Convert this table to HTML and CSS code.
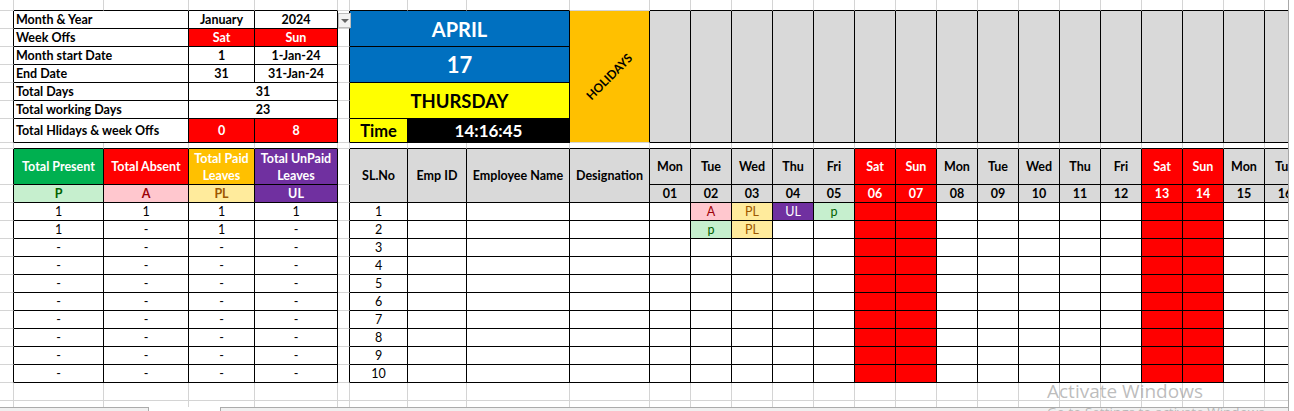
FILE: index.html
```html
<!DOCTYPE html>
<html>
<head>
<meta charset="utf-8">
<link rel="stylesheet" href="styles.css">
</head>
<body>
<div class="window">
  <div class="main">
    <div class="viewport">
      <table class="sheet">
        <colgroup>
          <col class="cA"><col class="cB"><col class="cC"><col class="cD"><col class="cE"><col class="cF"><col class="cG"><col class="cH"><col class="cI"><col class="cJ">
          <col class="cd"><col class="cd"><col class="cd"><col class="cd"><col class="cd"><col class="cd"><col class="cd"><col class="cd">
          <col class="cd"><col class="cd"><col class="cd"><col class="cd"><col class="cd"><col class="cd"><col class="cd"><col class="cd">
        </colgroup>
        <tr class="h11">
          <td></td><td class="kb"></td><td class="kb"></td><td class="kb"></td><td class="kb"></td><td></td><td class="kb"></td><td class="kb"></td><td class="kb"></td><td></td>
          <td class="kb"></td><td class="kb"></td><td class="kb"></td><td class="kb"></td><td class="kb"></td><td class="kb"></td><td class="kb"></td><td class="kb"></td>
          <td class="kb"></td><td class="kb"></td><td class="kb"></td><td class="kb"></td><td class="kb"></td><td class="kb"></td><td class="kb"></td><td class="kb"></td>
        </tr>
        <tr class="h18">
          <td class="kr"></td><td colspan="2" class="k lbl">Month &amp; Year</td><td class="k b">January</td><td class="k b">2024</td>
          <td class="kr ddcell"><span class="dd"><span class="tri"></span></span></td>
          <td colspan="3" rowspan="2" class="k blue big1">APRIL</td>
          <td rowspan="7" class="kr orange"><span class="hol">HOLIDAYS</span></td>
          <td rowspan="7" class="k gray"></td><td rowspan="7" class="k gray"></td><td rowspan="7" class="k gray"></td><td rowspan="7" class="k gray"></td>
          <td rowspan="7" class="k gray"></td><td rowspan="7" class="k gray"></td><td rowspan="7" class="k gray"></td><td rowspan="7" class="k gray"></td>
          <td rowspan="7" class="k gray"></td><td rowspan="7" class="k gray"></td><td rowspan="7" class="k gray"></td><td rowspan="7" class="k gray"></td>
          <td rowspan="7" class="k gray"></td><td rowspan="7" class="k gray"></td><td rowspan="7" class="k gray"></td><td rowspan="7" class="k gray"></td>
        </tr>
        <tr class="h18">
          <td class="kr"></td><td colspan="2" class="k lbl">Week Offs</td><td class="k red b">Sat</td><td class="k red b">Sun</td><td class="kr"></td>
        </tr>
        <tr class="h18">
          <td class="kr"></td><td colspan="2" class="k lbl">Month start Date</td><td class="k b">1</td><td class="k b">1-Jan-24</td><td class="kr"></td>
          <td colspan="3" rowspan="2" class="k blue big2">17</td>
        </tr>
        <tr class="h18">
          <td class="kr"></td><td colspan="2" class="k lbl">End Date</td><td class="k b">31</td><td class="k b">31-Jan-24</td><td class="kr"></td>
        </tr>
        <tr class="h18">
          <td class="kr"></td><td colspan="2" class="k lbl">Total Days</td><td colspan="2" class="k b">31</td><td class="kr"></td>
          <td colspan="3" rowspan="2" class="k yellow big3">THURSDAY</td>
        </tr>
        <tr class="h18">
          <td class="kr"></td><td colspan="2" class="k lbl">Total working Days</td><td colspan="2" class="k b">23</td><td class="kr"></td>
        </tr>
        <tr class="h24">
          <td class="kr"></td><td colspan="2" class="k lbl">Total Hlidays &amp; week Offs</td><td class="k red b">0</td><td class="k red b">8</td><td class="kr"></td>
          <td class="k yellow time">Time</td><td colspan="2" class="k black clock">14:16:45</td>
        </tr>
        <tr class="h6">
          <td></td><td class="kb"></td><td class="kb"></td><td class="kb"></td><td class="kb"></td><td></td><td class="kb"></td><td class="kb"></td><td class="kb"></td><td class="kb"></td>
          <td class="kb"></td><td class="kb"></td><td class="kb"></td><td class="kb"></td><td class="kb"></td><td class="kb"></td><td class="kb"></td><td class="kb"></td>
          <td class="kb"></td><td class="kb"></td><td class="kb"></td><td class="kb"></td><td class="kb"></td><td class="kb"></td><td class="kb"></td><td class="kb"></td>
        </tr>
        <tr class="h36">
          <td class="kr"></td>
          <td class="k hd green">Total Present</td><td class="k hd red">Total Absent</td><td class="k hd orange wt">Total Paid<br>Leaves</td><td class="k hd purple">Total UnPaid<br>Leaves</td>
          <td class="kr"></td>
          <td rowspan="2" class="k gray b">SL.No</td><td rowspan="2" class="k gray b">Emp ID</td><td rowspan="2" class="k gray b">Employee Name</td><td rowspan="2" class="k gray b">Designation</td>
          <td class="k gray b">Mon</td><td class="k gray b">Tue</td><td class="k gray b">Wed</td><td class="k gray b">Thu</td><td class="k gray b">Fri</td><td class="k red b">Sat</td><td class="k red b">Sun</td>
          <td class="k gray b">Mon</td><td class="k gray b">Tue</td><td class="k gray b">Wed</td><td class="k gray b">Thu</td><td class="k gray b">Fri</td><td class="k red b">Sat</td><td class="k red b">Sun</td>
          <td class="k gray b">Mon</td><td class="k gray b">Tue</td>
        </tr>
        <tr class="h18">
          <td class="kr"></td>
          <td class="k sP b">P</td><td class="k sA b">A</td><td class="k sPL b">PL</td><td class="k purple b">UL</td>
          <td class="kr"></td>
          <td class="k gray b">01</td><td class="k gray b">02</td><td class="k gray b">03</td><td class="k gray b">04</td><td class="k gray b">05</td><td class="k red b">06</td><td class="k red b">07</td>
          <td class="k gray b">08</td><td class="k gray b">09</td><td class="k gray b">10</td><td class="k gray b">11</td><td class="k gray b">12</td><td class="k red b">13</td><td class="k red b">14</td>
          <td class="k gray b">15</td><td class="k gray b">16</td>
        </tr>
        <tr class="h18">
          <td class="kr"></td><td class="k">1</td><td class="k">1</td><td class="k">1</td><td class="k">1</td><td class="kr"></td>
          <td class="k">1</td><td class="k"></td><td class="k"></td><td class="k"></td>
          <td class="k"></td><td class="k sA">A</td><td class="k sPL">PL</td><td class="k purple">UL</td><td class="k sP">p</td><td class="k red"></td><td class="k red"></td>
          <td class="k"></td><td class="k"></td><td class="k"></td><td class="k"></td><td class="k"></td><td class="k red"></td><td class="k red"></td><td class="k"></td><td class="k"></td>
        </tr>
        <tr class="h18">
          <td class="kr"></td><td class="k">1</td><td class="k">-</td><td class="k">1</td><td class="k">-</td><td class="kr"></td>
          <td class="k">2</td><td class="k"></td><td class="k"></td><td class="k"></td>
          <td class="k"></td><td class="k sP">p</td><td class="k sPL">PL</td><td class="k"></td><td class="k"></td><td class="k red"></td><td class="k red"></td>
          <td class="k"></td><td class="k"></td><td class="k"></td><td class="k"></td><td class="k"></td><td class="k red"></td><td class="k red"></td><td class="k"></td><td class="k"></td>
        </tr>
        <tr class="h18">
          <td class="kr"></td><td class="k">-</td><td class="k">-</td><td class="k">-</td><td class="k">-</td><td class="kr"></td>
          <td class="k">3</td><td class="k"></td><td class="k"></td><td class="k"></td>
          <td class="k"></td><td class="k"></td><td class="k"></td><td class="k"></td><td class="k"></td><td class="k red"></td><td class="k red"></td>
          <td class="k"></td><td class="k"></td><td class="k"></td><td class="k"></td><td class="k"></td><td class="k red"></td><td class="k red"></td><td class="k"></td><td class="k"></td>
        </tr>
        <tr class="h18">
          <td class="kr"></td><td class="k">-</td><td class="k">-</td><td class="k">-</td><td class="k">-</td><td class="kr"></td>
          <td class="k">4</td><td class="k"></td><td class="k"></td><td class="k"></td>
          <td class="k"></td><td class="k"></td><td class="k"></td><td class="k"></td><td class="k"></td><td class="k red"></td><td class="k red"></td>
          <td class="k"></td><td class="k"></td><td class="k"></td><td class="k"></td><td class="k"></td><td class="k red"></td><td class="k red"></td><td class="k"></td><td class="k"></td>
        </tr>
        <tr class="h18">
          <td class="kr"></td><td class="k">-</td><td class="k">-</td><td class="k">-</td><td class="k">-</td><td class="kr"></td>
          <td class="k">5</td><td class="k"></td><td class="k"></td><td class="k"></td>
          <td class="k"></td><td class="k"></td><td class="k"></td><td class="k"></td><td class="k"></td><td class="k red"></td><td class="k red"></td>
          <td class="k"></td><td class="k"></td><td class="k"></td><td class="k"></td><td class="k"></td><td class="k red"></td><td class="k red"></td><td class="k"></td><td class="k"></td>
        </tr>
        <tr class="h18">
          <td class="kr"></td><td class="k">-</td><td class="k">-</td><td class="k">-</td><td class="k">-</td><td class="kr"></td>
          <td class="k">6</td><td class="k"></td><td class="k"></td><td class="k"></td>
          <td class="k"></td><td class="k"></td><td class="k"></td><td class="k"></td><td class="k"></td><td class="k red"></td><td class="k red"></td>
          <td class="k"></td><td class="k"></td><td class="k"></td><td class="k"></td><td class="k"></td><td class="k red"></td><td class="k red"></td><td class="k"></td><td class="k"></td>
        </tr>
        <tr class="h18">
          <td class="kr"></td><td class="k">-</td><td class="k">-</td><td class="k">-</td><td class="k">-</td><td class="kr"></td>
          <td class="k">7</td><td class="k"></td><td class="k"></td><td class="k"></td>
          <td class="k"></td><td class="k"></td><td class="k"></td><td class="k"></td><td class="k"></td><td class="k red"></td><td class="k red"></td>
          <td class="k"></td><td class="k"></td><td class="k"></td><td class="k"></td><td class="k"></td><td class="k red"></td><td class="k red"></td><td class="k"></td><td class="k"></td>
        </tr>
        <tr class="h18">
          <td class="kr"></td><td class="k">-</td><td class="k">-</td><td class="k">-</td><td class="k">-</td><td class="kr"></td>
          <td class="k">8</td><td class="k"></td><td class="k"></td><td class="k"></td>
          <td class="k"></td><td class="k"></td><td class="k"></td><td class="k"></td><td class="k"></td><td class="k red"></td><td class="k red"></td>
          <td class="k"></td><td class="k"></td><td class="k"></td><td class="k"></td><td class="k"></td><td class="k red"></td><td class="k red"></td><td class="k"></td><td class="k"></td>
        </tr>
        <tr class="h18">
          <td class="kr"></td><td class="k">-</td><td class="k">-</td><td class="k">-</td><td class="k">-</td><td class="kr"></td>
          <td class="k">9</td><td class="k"></td><td class="k"></td><td class="k"></td>
          <td class="k"></td><td class="k"></td><td class="k"></td><td class="k"></td><td class="k"></td><td class="k red"></td><td class="k red"></td>
          <td class="k"></td><td class="k"></td><td class="k"></td><td class="k"></td><td class="k"></td><td class="k red"></td><td class="k red"></td><td class="k"></td><td class="k"></td>
        </tr>
        <tr class="h18">
          <td class="kr"></td><td class="k">-</td><td class="k">-</td><td class="k">-</td><td class="k">-</td><td class="kr"></td>
          <td class="k">10</td><td class="k"></td><td class="k"></td><td class="k"></td>
          <td class="k"></td><td class="k"></td><td class="k"></td><td class="k"></td><td class="k"></td><td class="k red"></td><td class="k red"></td>
          <td class="k"></td><td class="k"></td><td class="k"></td><td class="k"></td><td class="k"></td><td class="k red"></td><td class="k red"></td><td class="k"></td><td class="k"></td>
        </tr>
        <tr class="h18">
          <td></td><td></td><td></td><td></td><td></td><td></td><td></td><td></td><td></td><td></td>
          <td></td><td></td><td></td><td></td><td></td><td></td><td></td><td></td>
          <td></td><td></td><td></td><td></td><td></td><td></td><td></td><td></td>
        </tr>
        <tr class="h8">
          <td></td><td></td><td></td><td></td><td></td><td></td><td></td><td></td><td></td><td></td>
          <td></td><td></td><td></td><td></td><td></td><td></td><td></td><td></td>
          <td></td><td></td><td></td><td></td><td></td><td></td><td></td><td></td>
        </tr>
      </table>
    </div>
    <div class="edge"></div>
  </div>
  <div class="bottombar">
    <div class="tabs"></div>
    <div class="gap"></div>
    <div class="hscroll"></div>
  </div>
  <div class="watermark">
    <div class="wm1">Activate Windows</div>
    <div class="wm2">Go to Settings to activate Windows.</div>
  </div>
</div>
</body>
</html>
```

FILE: styles.css
```css
* { box-sizing: border-box; }
html, body { margin: 0; padding: 0; background: #fff; }
body {
  font-family: Lato, "Liberation Sans", sans-serif;
  font-size: 12.5px;
  color: #000;
}
.window { position: relative; width: 1294px; height: 411px; overflow: hidden; }
.main { display: flex; height: 407px; }
.viewport { width: 1288px; height: 407px; overflow: hidden; }
.edge { flex: 1; border-left: 1px solid #a8a8a8; }
.bottombar { display: flex; height: 4px; }
.tabs { width: 149px; background: #f0f0f0; border-top: 1px solid #ababab; border-right: 1px solid #ababab; }
.gap { width: 71px; }
.hscroll { width: 1069px; background: #f0f0f0; border-top: 1px solid #ababab; border-left: 1px solid #ababab; border-right: 1px solid #ababab; }

.sheet { table-layout: fixed; border-collapse: separate; border-spacing: 0; width: 1306px; }
.cA { width: 14px; } .cB { width: 90px; } .cC { width: 85px; } .cD { width: 66px; } .cE { width: 83px; }
.cF { width: 12px; } .cG { width: 58px; } .cH { width: 59px; } .cI { width: 103px; } .cJ { width: 80px; }
.cd { width: 41px; }

.h11 { height: 11px; } .h18 { height: 18px; } .h24 { height: 24px; } .h6 { height: 6px; }
.h36 { height: 36px; } .h8 { height: 8px; }

.sheet td {
  padding: 0;
  border-right: 1px solid #d4d4d4;
  border-bottom: 1px solid #d4d4d4;
  text-align: center;
  vertical-align: middle;
  white-space: nowrap;
  overflow: hidden;
  line-height: 14px;
}
.sheet td.k { border-right-color: #000; border-bottom-color: #000; }
.sheet td.kr { border-right-color: #000; }
.sheet td.kb { border-bottom-color: #000; }

.b { font-weight: 700; }
.sheet td.lbl { text-align: left; padding-left: 2px; font-weight: 700; }

.red { background: #ff0000; color: #fff; }
.blue { background: #0070c0; color: #fff; }
.yellow { background: #ffff00; color: #000; }
.orange { background: #ffc000; }
.gray { background: #d9d9d9; }
.green { background: #00b050; color: #fff; }
.purple { background: #7030a0; color: #fff; }
.black { background: #000; color: #fff; }
.wt { color: #fff; }
.sP { background: #c6efce; color: #006100; }
.sA { background: #ffc7ce; color: #9c0006; }
.sPL { background: #ffeb9c; color: #9c5700; }

.big1 { font-size: 20px; font-weight: 700; }
.big2 { font-size: 22px; font-weight: 700; }
.big3 { font-size: 18.5px; font-weight: 700; }
.sheet td.time { font-size: 16.5px; font-weight: 700; line-height: 20px; }
.sheet td.clock { font-size: 17px; font-weight: 700; line-height: 20px; }
.sheet td.big1, .sheet td.big2, .sheet td.big3 { line-height: 24px; }
.sheet td.hd { font-weight: 700; line-height: 17px; }

.hol {
  display: inline-block;
  transform: rotate(-45deg);
  font-size: 12px;
  font-weight: 700;
}

.sheet td.ddcell { position: relative; overflow: visible; }
.dd {
  position: absolute;
  left: 0;
  top: 2px;
  width: 13px;
  height: 15px;
  background: #f2f2f2;
  border: 1px solid #bdbdbd;
  display: flex;
  align-items: center;
  justify-content: center;
  z-index: 2;
}
.tri {
  width: 0; height: 0;
  border-left: 4px solid transparent;
  border-right: 4px solid transparent;
  border-top: 4px solid #666;
}

.watermark {
  position: absolute;
  left: 1047px;
  top: 379px;
  font-family: "Open Sans", "Noto Sans", sans-serif;
  color: rgba(160, 160, 160, 0.7);
  pointer-events: none;
}
.wm1 { font-size: 19px; line-height: 25px; }
.wm2 { font-size: 13.5px; line-height: 16px; }
```
